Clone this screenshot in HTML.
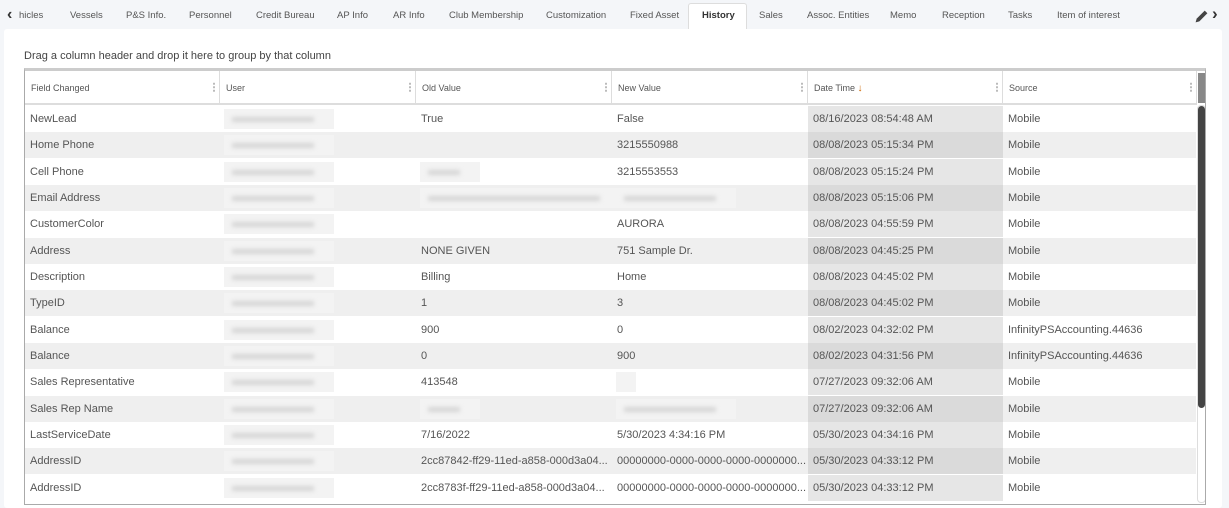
<!DOCTYPE html>
<html><head><style>
*{margin:0;padding:0;box-sizing:border-box}
body{width:1229px;height:508px;background:#f4f6f9;font-family:"Liberation Sans",sans-serif;color:#555;position:relative;overflow:hidden}
.tab{position:absolute;top:10px;font-size:9.5px;color:#555;white-space:nowrap}
.panel{position:absolute;left:4px;top:29px;width:1218px;height:479px;background:#fff;border-radius:3px}
.grid{position:absolute;left:24px;top:68px;width:1182px;height:437px;border:1px solid #aaa;border-top:3px solid #ccc;overflow:hidden}
.hd{position:absolute;top:0;height:34px;border-bottom:2px solid #ddd;font-size:9px;line-height:34px;padding-left:6px;color:#555}
.hd .dots{position:absolute;right:5px;top:11px;width:2px;height:10px;background:radial-gradient(circle,#bbb 1px,transparent 1.2px) 0 0/2px 3.5px repeat-y}
.vl{position:absolute;top:0;height:34px;width:1px;background:#ddd}
.row{position:absolute;left:0;width:1171px;height:26px;font-size:11px;line-height:26px}
.row.g{background:#efefef}
.c{position:absolute;top:0;height:26px;padding-left:5px;white-space:nowrap;overflow:hidden}
.dt{background:#e6e6e6}
.g .dt{background:#dadada}
.bl{position:absolute;top:3px;height:20px;background:#f3f3f3}
.bl::after{content:"";position:absolute;left:8px;right:20px;top:8px;height:5px;background:#d6d6d6;filter:blur(2px)}
</style></head><body>
<div style="position:absolute;left:7px;top:6px;font-size:16px;font-weight:bold;color:#333">&#8249;</div>
<div class="tab" style="left:19px">hicles</div>
<div class="tab" style="left:70px">Vessels</div>
<div class="tab" style="left:126px">P&amp;S Info.</div>
<div class="tab" style="left:189px">Personnel</div>
<div class="tab" style="left:256px">Credit Bureau</div>
<div class="tab" style="left:337px">AP Info</div>
<div class="tab" style="left:393px">AR Info</div>
<div class="tab" style="left:449px">Club Membership</div>
<div class="tab" style="left:546px">Customization</div>
<div style="position:absolute;left:688px;top:3px;width:59px;height:27px;background:#fff;border:1px solid #ddd;border-bottom:none;border-radius:3px 3px 0 0"></div>
<div class="tab" style="left:630px">Fixed Asset</div>
<div class="tab" style="left:702px;font-weight:bold;color:#333">History</div>
<div class="tab" style="left:759px">Sales</div>
<div class="tab" style="left:807px">Assoc. Entities</div>
<div class="tab" style="left:890px">Memo</div>
<div class="tab" style="left:942px">Reception</div>
<div class="tab" style="left:1008px">Tasks</div>
<div class="tab" style="left:1057px">Item of interest</div>
<svg style="position:absolute;left:1194px;top:9px" width="15" height="15" viewBox="0 0 14 14"><path d="M1.5 12.5 L2.5 9 L10 1.5 L12.5 4 L5 11.5 Z" fill="#444"/></svg>
<div style="position:absolute;left:1212px;top:4px;font-size:17px;font-weight:bold;color:#333">&#8250;</div>
<div class="panel"></div>
<div style="position:absolute;left:24px;top:50px;font-size:11px;color:#444">Drag a column header and drop it here to group by that column</div>
<div class="grid">
<div class="hd" style="left:0;width:195px">Field Changed<span class="dots"></span></div>
<div class="hd" style="left:195px;width:196px">User<span class="dots"></span></div>
<div class="hd" style="left:391px;width:196px">Old Value<span class="dots"></span></div>
<div class="hd" style="left:587px;width:196px">New Value<span class="dots"></span></div>
<div class="hd" style="left:783px;width:195px">Date Time <span style="color:#c60;font-size:10px">&#8595;</span><span class="dots"></span></div>
<div class="hd" style="left:978px;width:194px">Source<span class="dots"></span></div>
<div class="hd" style="left:1172px;width:10px;padding:0;border:none"></div>
<div class="vl" style="left:194px"></div><div class="vl" style="left:390px"></div><div class="vl" style="left:586px"></div><div class="vl" style="left:782px"></div><div class="vl" style="left:977px"></div><div class="vl" style="left:1171px"></div>
<div style="position:absolute;left:1173px;top:2px;width:7px;height:30px;background:#888"></div>
<div style="position:absolute;left:1172px;top:34px;width:9px;height:398px;border:1px solid #ddd;border-radius:4px"></div>
<div style="position:absolute;left:1173px;top:35px;width:7px;height:302px;background:#444;border-radius:4px"></div>
<div id="rows"></div>
</div>
<script>
var d=[["NewLead","True","False","08/16/2023 08:54:48 AM","Mobile"],["Home Phone","","3215550988","08/08/2023 05:15:34 PM","Mobile"],["Cell Phone","~s","3215553553","08/08/2023 05:15:24 PM","Mobile"],["Email Address","~l","~m","08/08/2023 05:15:06 PM","Mobile"],["CustomerColor","","AURORA","08/08/2023 04:55:59 PM","Mobile"],["Address","NONE GIVEN","751 Sample Dr.","08/08/2023 04:45:25 PM","Mobile"],["Description","Billing","Home","08/08/2023 04:45:02 PM","Mobile"],["TypeID","1","3","08/08/2023 04:45:02 PM","Mobile"],["Balance","900","0","08/02/2023 04:32:02 PM","InfinityPSAccounting.44636"],["Balance","0","900","08/02/2023 04:31:56 PM","InfinityPSAccounting.44636"],["Sales Representative","413548","~t","07/27/2023 09:32:06 AM","Mobile"],["Sales Rep Name","~s","~m","07/27/2023 09:32:06 AM","Mobile"],["LastServiceDate","7/16/2022","5/30/2023 4:34:16 PM","05/30/2023 04:34:16 PM","Mobile"],["AddressID","2cc87842-ff29-11ed-a858-000d3a04...","00000000-0000-0000-0000-0000000...","05/30/2023 04:33:12 PM","Mobile"],["AddressID","2cc8783f-ff29-11ed-a858-000d3a04...","00000000-0000-0000-0000-0000000...","05/30/2023 04:33:12 PM","Mobile"]];
var L=[0,195,391,587,783,978],W=[195,196,196,196,195,194],h="";
function cell(v,i){if(v[0]=="~"){var w={s:60,l:200,m:120,t:20}[v[1]];return '<div class="bl" style="left:'+(L[i]+4)+'px;width:'+w+'px"></div>';}return '<div class="c'+(i==4?' dt':'')+'" style="left:'+L[i]+'px;width:'+W[i]+'px">'+v+'</div>';}
d.forEach(function(r,k){var t=Math.round(35+k*26.33);h+='<div class="row'+(k%2?' g':'')+'" style="top:'+t+'px">'+cell(r[0],0)+'<div class="bl" style="left:199px;width:110px"></div>'+cell(r[1],2)+cell(r[2],3)+cell(r[3],4)+cell(r[4],5)+'</div>';});
document.getElementById("rows").innerHTML=h;
</script>
</body></html>
